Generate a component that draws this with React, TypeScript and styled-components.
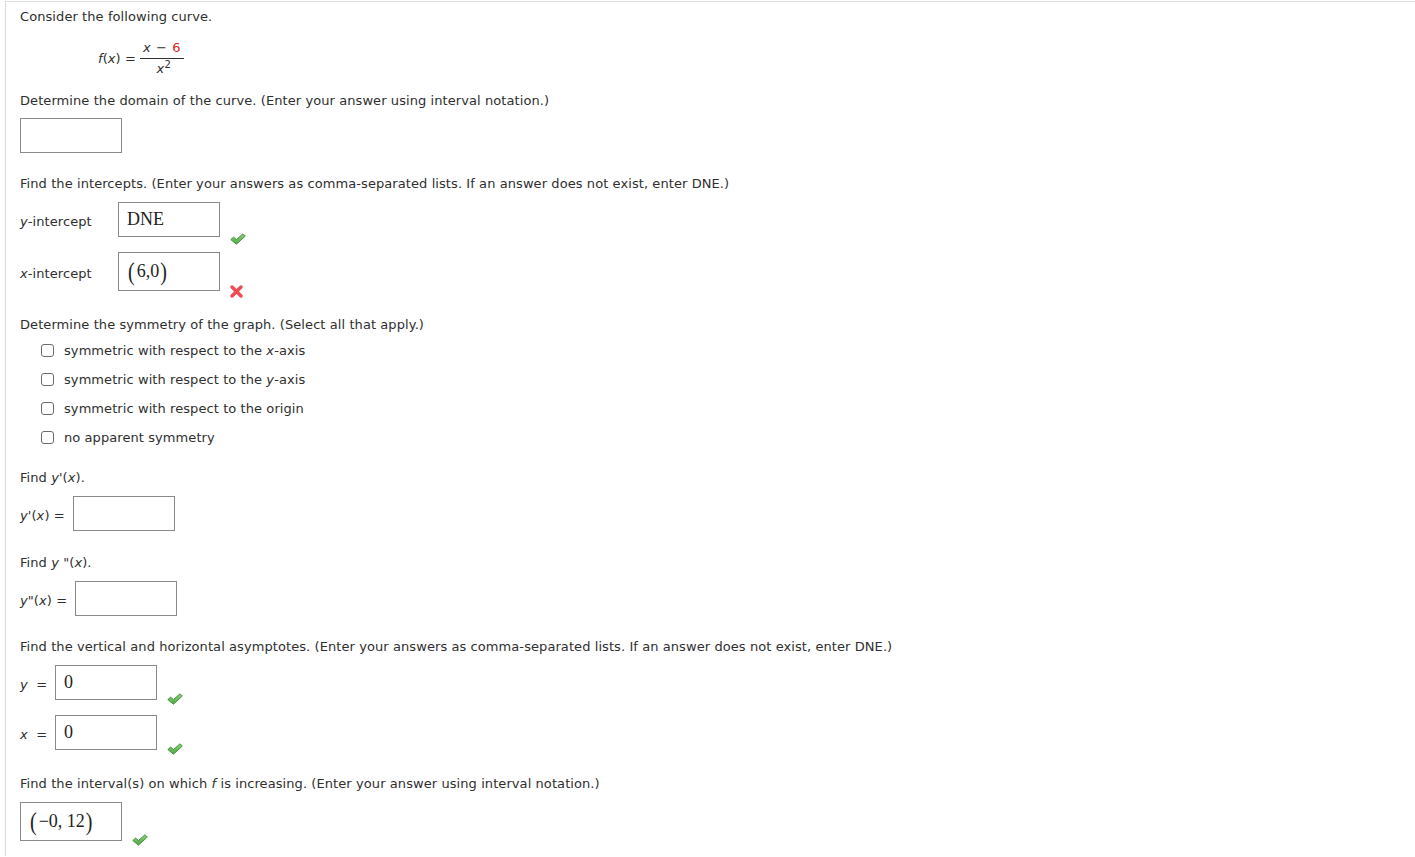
import React from "react";
import styled, { createGlobalStyle } from "styled-components";

const GlobalStyle = createGlobalStyle`
  html, body {
    margin: 0;
    padding: 0;
    background: #fff;
  }
  body {
    font-family: "DejaVu Sans", Verdana, sans-serif;
    font-size: 13px;
    letter-spacing: 0.08px;
    color: #2f2f2f;
  }
`;

const Frame = styled.div`
  margin: 1px 0 0 5px;
  border-top: 1px solid #dcdcdc;
  border-left: 1px solid #dcdcdc;
  min-height: calc(100vh - 2px);
  padding: 7px 0 0 14px;
  box-sizing: border-box;
  display: flex;
  flex-direction: column;
  align-items: flex-start;
`;

const Text = styled.div<{ $mt?: number }>`
  margin-top: ${(p) => p.$mt ?? 0}px;
  line-height: 16px;
  white-space: nowrap;
`;

const V = styled.i`
  font-style: italic;
`;

const Formula = styled.div<{ $mt: number }>`
  margin-top: ${(p) => p.$mt}px;
  margin-left: 78px;
  display: flex;
  align-items: center;
  line-height: 16px;
`;

const Lhs = styled.span`
  margin-right: 4px;
  padding-top: 1px;
`;

const Fraction = styled.span`
  display: flex;
  flex-direction: column;
  align-items: center;
`;

const Numer = styled.span`
  padding: 0 3px 2px;
  border-bottom: 1px solid #333;
  word-spacing: 1px;
`;

const Denom = styled.span`
  padding-top: 2px;
  padding-left: 4px;
`;

const Red = styled.span`
  color: #e02020;
`;

const Sup = styled.sup`
  font-size: 10px;
  line-height: 0;
  vertical-align: 5px;
`;

const Row = styled.div<{ $mt: number }>`
  margin-top: ${(p) => p.$mt}px;
  display: flex;
  align-items: flex-start;
`;

const Label = styled.span<{ $w: number; $h: number }>`
  width: ${(p) => p.$w}px;
  height: ${(p) => p.$h}px;
  display: flex;
  align-items: center;
  padding-top: 3px;
  box-sizing: border-box;
  white-space: nowrap;
`;

const AnswerBox = styled.div<{ $h: number }>`
  width: 102px;
  height: ${(p) => p.$h}px;
  box-sizing: border-box;
  border: 1px solid #8a8a8a;
  padding-left: 8px;
  display: flex;
  align-items: center;
  font-family: "Liberation Serif", "DejaVu Serif", serif;
  font-size: 18px;
  letter-spacing: 0;
  color: #222;
`;

const Paren = styled.span`
  display: inline-block;
  font-size: 20px;
  line-height: 1;
  transform: scaleY(1.3) translateY(-1px);
  margin: 0 2px 0 1px;
`;

const Mark = styled.span<{ $mt: number }>`
  margin: ${(p) => p.$mt}px 0 0 10px;
  display: block;
  height: 0;
  overflow: visible;
  line-height: 0;
`;

const ChoiceList = styled.div`
  margin-top: 3px;
  margin-left: 21px;
  display: flex;
  flex-direction: column;
`;

const Choice = styled.label`
  height: 29px;
  display: flex;
  align-items: center;
  gap: 10px;
  white-space: nowrap;
`;

const Box = styled.span`
  width: 13px;
  height: 13px;
  box-sizing: border-box;
  border: 1px solid #6b6b6b;
  border-radius: 3px;
  background: #fff;
`;

const Check = () => (
  <svg width="16" height="12" viewBox="0 0 16 12">
    <defs>
      <linearGradient id="g" x1="0" y1="0" x2="0" y2="1">
        <stop offset="0" stopColor="#8fd27a" />
        <stop offset="1" stopColor="#4ea845" />
      </linearGradient>
    </defs>
    <path
      d="M0.8 6.6 L3.6 4.1 L6.4 6.6 L13 0.8 L15.3 3.1 L6.4 11.2 Z"
      fill="url(#g)"
      stroke="#3c8a36"
      strokeWidth="0.9"
      strokeLinejoin="round"
    />
  </svg>
);

const Cross = () => (
  <svg width="13" height="13" viewBox="0 0 13 13">
    <path
      d="M2 2 L11 11 M11 2 L2 11"
      stroke="#ee4c55"
      strokeWidth="3.4"
      strokeLinecap="round"
    />
  </svg>
);

const symmetry: React.ReactNode[] = [
  <>symmetric with respect to the <V>x</V>-axis</>,
  <>symmetric with respect to the <V>y</V>-axis</>,
  <>symmetric with respect to the origin</>,
  <>no apparent symmetry</>,
];

const App: React.FC = () => {
  return (
    <>
      <GlobalStyle />
      <Frame>
        <Text>Consider the following curve.</Text>
        <Formula $mt={15}>
          <Lhs>
            <V>f</V>(<V>x</V>) =
          </Lhs>
          <Fraction>
            <Numer>
              <V>x</V> − <Red>6</Red>
            </Numer>
            <Denom>
              <V>x</V>
              <Sup>2</Sup>
            </Denom>
          </Fraction>
        </Formula>

        <Text $mt={16}>Determine the domain of the curve. (Enter your answer using interval notation.)</Text>
        <Row $mt={9}>
          <AnswerBox $h={35} />
        </Row>

        <Text $mt={23}>
          Find the intercepts. (Enter your answers as comma-separated lists. If an answer does not exist, enter DNE.)
        </Text>
        <Row $mt={10}>
          <Label $w={98} $h={35}>
            <V>y</V>-intercept
          </Label>
          <AnswerBox $h={35}>DNE</AnswerBox>
          <Mark $mt={31}>
            <Check />
          </Mark>
        </Row>
        <Row $mt={15}>
          <Label $w={98} $h={39}>
            <V>x</V>-intercept
          </Label>
          <AnswerBox $h={39}>
            <Paren>(</Paren>6,0<Paren>)</Paren>
          </AnswerBox>
          <Mark $mt={33}>
            <Cross />
          </Mark>
        </Row>

        <Text $mt={26}>Determine the symmetry of the graph. (Select all that apply.)</Text>
        <ChoiceList>
          {symmetry.map((s, i) => (
            <Choice key={i}>
              <Box />
              <span>{s}</span>
            </Choice>
          ))}
        </ChoiceList>

        <Text $mt={18}>
          Find <V>y</V>'(<V>x</V>).
        </Text>
        <Row $mt={10}>
          <Label $w={53} $h={35}>
            <V>y</V>'(<V>x</V>) =
          </Label>
          <AnswerBox $h={35} />
        </Row>

        <Text $mt={24}>
          Find <V>y</V> <V>"</V>(<V>x</V>).
        </Text>
        <Row $mt={10}>
          <Label $w={55} $h={35}>
            <V>y</V> <V>"</V>(<V>x</V>) =
          </Label>
          <AnswerBox $h={35} />
        </Row>

        <Text $mt={23}>
          Find the vertical and horizontal asymptotes. (Enter your answers as comma-separated lists. If an answer does not exist, enter DNE.)
        </Text>
        <Row $mt={10}>
          <Label $w={35} $h={35}>
            <V>y</V>&nbsp;&nbsp;=
          </Label>
          <AnswerBox $h={35}>0</AnswerBox>
          <Mark $mt={28}>
            <Check />
          </Mark>
        </Row>
        <Row $mt={15}>
          <Label $w={35} $h={35}>
            <V>x</V>&nbsp;&nbsp;=
          </Label>
          <AnswerBox $h={35}>0</AnswerBox>
          <Mark $mt={28}>
            <Check />
          </Mark>
        </Row>

        <Text $mt={26}>
          Find the interval(s) on which <V>f</V> is increasing. (Enter your answer using interval notation.)
        </Text>
        <Row $mt={10}>
          <AnswerBox $h={39}>
            <Paren>(</Paren>−0, 12<Paren>)</Paren>
          </AnswerBox>
          <Mark $mt={32}>
            <Check />
          </Mark>
        </Row>
      </Frame>
    </>
  );
};

export default App;
